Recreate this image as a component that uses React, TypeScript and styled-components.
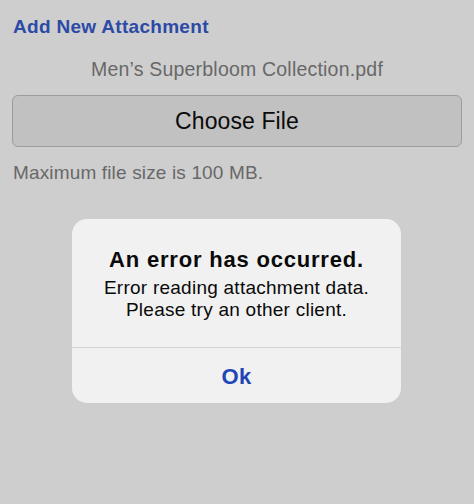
import React from 'react';
import styled, { createGlobalStyle } from 'styled-components';

const GlobalStyle = createGlobalStyle`
    html, body {
        margin: 0;
        padding: 0;
        background: #cecece;
        font-family: "Liberation Sans", Arial, sans-serif;
        -webkit-font-smoothing: antialiased;
    }
`;

const Page = styled.div`
    position: relative;
    width: 474px;
    height: 504px;
    overflow: hidden;
    background: #cecece;
`;

const Form = styled.div`
    display: flex;
    flex-direction: column;
    padding: 15px 12px 0 12px;
`;

const Heading = styled.h2`
    margin: 0 0 0 1px;
    font-size: 19px;
    line-height: 24px;
    font-weight: 700;
    letter-spacing: 0.3px;
    color: #2c4aa6;
`;

const FileName = styled.div`
    margin-top: 18px;
    text-align: center;
    font-size: 19.5px;
    line-height: 24px;
    letter-spacing: 0.2px;
    color: #686868;
`;

const ChooseButton = styled.button`
    margin-top: 14px;
    height: 52px;
    width: 100%;
    box-sizing: border-box;
    border: 1px solid #9c9c9c;
    border-radius: 6px;
    background: #c1c1c1;
    color: #0a0a0a;
    font-family: "Liberation Sans", Arial, sans-serif;
    font-size: 23px;
    letter-spacing: 0.1px;
    cursor: pointer;
`;

const Hint = styled.div`
    margin: 14px 0 0 1px;
    font-size: 19px;
    line-height: 24px;
    letter-spacing: 0.15px;
    color: #686868;
`;

const Overlay = styled.div`
    position: absolute;
    inset: 0;
    display: flex;
    justify-content: center;
    align-items: flex-start;
    padding-top: 219px;
    padding-right: 1px;
`;

const Dialog = styled.div`
    width: 329px;
    height: 184px;
    display: flex;
    flex-direction: column;
    background: #f1f1f1;
    border-radius: 15px;
    overflow: hidden;
`;

const Body = styled.div`
    flex: 1;
    display: flex;
    flex-direction: column;
    align-items: center;
    padding-top: 28px;
    text-align: center;
    color: #0a0a0a;
`;

const DialogTitle = styled.div`
    font-size: 22px;
    line-height: 26px;
    font-weight: 700;
    letter-spacing: 0.8px;
`;

const Message = styled.div`
    margin-top: 4px;
    font-size: 19px;
    line-height: 22px;
    letter-spacing: 0.25px;
`;

const Divider = styled.div`
    height: 1px;
    background: #d3d3d3;
`;

const OkButton = styled.button`
    height: 55px;
    padding-top: 3px;
    border: none;
    background: transparent;
    color: #1f45b6;
    font-family: "Liberation Sans", Arial, sans-serif;
    font-size: 22px;
    font-weight: 700;
    letter-spacing: 0.3px;
    cursor: pointer;
`;

const App = () => {
    return (
        <Page>
            <GlobalStyle />
            <Form>
                <Heading>Add New Attachment</Heading>
                <FileName>Men’s Superbloom Collection.pdf</FileName>
                <ChooseButton>Choose File</ChooseButton>
                <Hint>Maximum file size is 100 MB.</Hint>
            </Form>
            <Overlay>
                <Dialog>
                    <Body>
                        <DialogTitle>An error has occurred.</DialogTitle>
                        <Message>
                            Error reading attachment data.
                            <br />
                            Please try an other client.
                        </Message>
                    </Body>
                    <Divider />
                    <OkButton>Ok</OkButton>
                </Dialog>
            </Overlay>
        </Page>
    );
};

export default App;
